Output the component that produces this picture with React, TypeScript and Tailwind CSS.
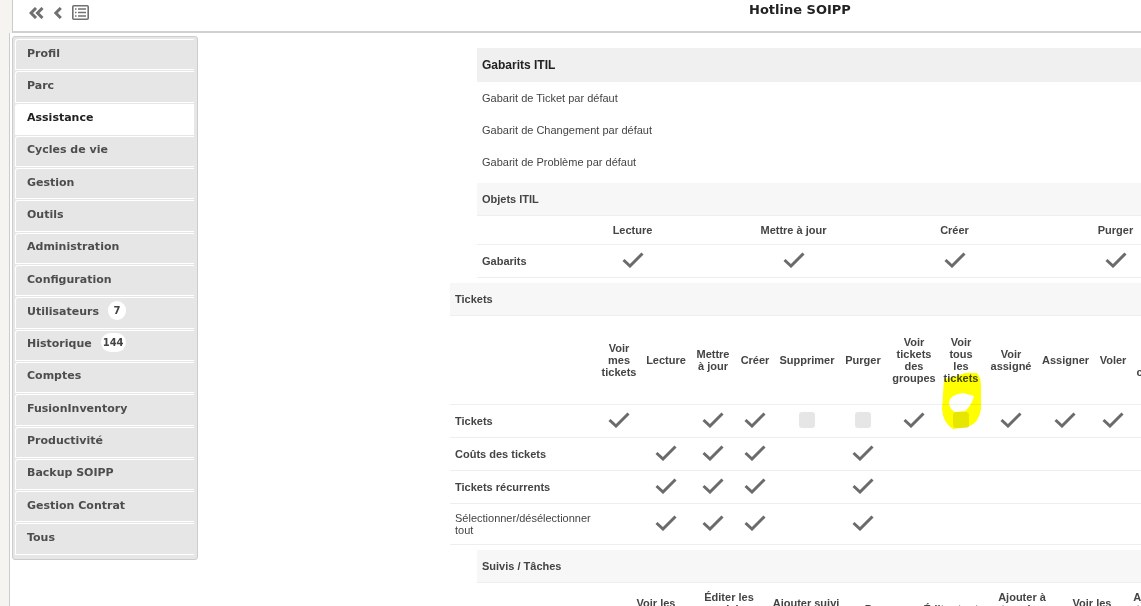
import React from "react";

const menuItems = [
  { label: "Profil" },
  { label: "Parc" },
  { label: "Assistance", active: true },
  { label: "Cycles de vie" },
  { label: "Gestion" },
  { label: "Outils" },
  { label: "Administration" },
  { label: "Configuration" },
  { label: "Utilisateurs", badge: "7" },
  { label: "Historique", badge: "144" },
  { label: "Comptes" },
  { label: "FusionInventory" },
  { label: "Productivité" },
  { label: "Backup SOIPP" },
  { label: "Gestion Contrat" },
  { label: "Tous" },
];

const ticketCols = [
  { w: "w-[46px] px-[4px]", label: "Voir mes tickets" },
  { w: "w-[48px]", label: "Lecture" },
  { w: "w-[46px] px-[4px]", label: "Mettre à jour" },
  { w: "w-[38px]", label: "Créer" },
  { w: "w-[66px]", label: "Supprimer" },
  { w: "w-[46px]", label: "Purger" },
  { w: "w-[56px]", label: "Voir tickets des groupes" },
  { w: "w-[38px]", label: "Voir tous les tickets" },
  { w: "w-[62px]", label: "Voir assigné" },
  { w: "w-[46px]", label: "Assigner" },
  { w: "w-[50px]", label: "Voler" },
  { w: "-ml-[2px] w-[56px]", label: "Voir les tickets concernés" },
];

// y = check, o = greyed box, . = empty
const ticketRows = [
  { label: "Tickets", h: "h-[33px]", cells: "y.yyooyoyyy." },
  { label: "Coûts des tickets", h: "h-[33px]", cells: ".yyy.y......" },
  { label: "Tickets récurrents", h: "h-[33px]", cells: ".yyy.y......" },
  { label: "Sélectionner/désélectionner tout", h: "h-[41px]", cells: ".yyy.y......" },
];

const followCols = [
  { w: "w-[66px]", label: "Voir les suivis" },
  { w: "w-[80px] px-[12px]", label: "Éditer les suivis privés" },
  { w: "w-[74px]", label: "Ajouter suivi privé" },
  { w: "w-[79px]", label: "Purger" },
  { w: "w-[58px]", label: "Éditer tout" },
  { w: "w-[84px] px-[14px]", label: "Ajouter à tous les tickets" },
  { w: "w-[56px]", label: "Voir les tâches" },
  { w: "w-[74px] px-[6px]", label: "Ajouter à tous les suivis" },
];

function Check() {
  return (
    <svg viewBox="0 0 22 16" className="h-4 w-[22px]">
      <path d="M1.5 8 L8 14 L20.5 1.5" fill="none" stroke="#6b6b6b" strokeWidth="3" />
    </svg>
  );
}

function Cell({ kind }: { kind: string }) {
  if (kind === "y") return <Check />;
  if (kind === "o") return <span className="block h-4 w-4 rounded-[3px] bg-[#e6e6e6]" />;
  return null;
}

function HeaderIcons() {
  return (
    <div className="ml-[16px] flex items-center text-[#707070]">
      <svg viewBox="0 0 15 12" className="h-3 w-[15px]">
        <path d="M7 1 L2 6 L7 11 M13.5 1 L8.5 6 L13.5 11" fill="none" stroke="currentColor" strokeWidth="3" />
      </svg>
      <svg viewBox="0 0 8 12" className="ml-[10px] h-3 w-2">
        <path d="M6.8 1 L1.8 6 L6.8 11" fill="none" stroke="currentColor" strokeWidth="3" />
      </svg>
      <svg viewBox="0 0 17 15" className="ml-[10px] h-[15px] w-[17px]">
        <rect x="0.8" y="0.8" width="15.4" height="13.4" rx="1" fill="none" stroke="currentColor" strokeWidth="1.6" />
        <path d="M6 4 H14 M6 7.5 H14 M6 11 H14 M3 4 H4.5 M3 7.5 H4.5 M3 11 H4.5" stroke="currentColor" strokeWidth="1.3" />
      </svg>
    </div>
  );
}

function Sidebar() {
  return (
    <div className="ml-[2px] mt-[3px] h-[524px] w-[186px] shrink-0 rounded-[3px] border border-[#cccccc] bg-[#e6e6e6] py-[2px] pl-[2px] pr-[3px] font-['DejaVu_Sans',sans-serif] text-[11px] font-bold">
      {menuItems.map((item) => (
        <div
          key={item.label}
          className={
            item.active
              ? "mb-[1px] flex h-[31.3px] items-start rounded-tl-[3px] bg-white pl-[12px] pt-[6px] text-[#222222]"
              : "mb-[1px] flex h-[31.3px] items-start rounded-tl-[3px] border-b border-l border-t border-white pl-[11px] pt-[5.5px] text-[#4d4d4d]"
          }
        >
          {item.label}
          {item.badge && (
            <span className="ml-[9px] -mt-[3px] flex h-[19px] min-w-[18px] items-center justify-center rounded-full bg-white px-[2px] text-[10px] text-[#444444]">
              {item.badge}
            </span>
          )}
        </div>
      ))}
    </div>
  );
}

// multiply so the header text and the grey box show through the marker stroke
function HighlightBlob() {
  return (
    <svg viewBox="0 0 42 56" className="absolute left-[491px] top-[340px] h-[56px] w-[42px] mix-blend-multiply">
      <path
        fillRule="evenodd"
        d="M3 6 Q12 5 24 0 L36 0 Q40 4 40 14 L40 36 Q38 50 27 54 L12 56 Q2 50 1 36 Z M8 29 Q9 22 22 20 L33 23 Q31 32 24 38 L14 39 Q8 36 8 29 Z"
        fill="#ffff00"
      />
    </svg>
  );
}

export default function App() {
  return (
    <div className="flex h-[606px] w-[1141px] flex-col overflow-hidden bg-white font-['Liberation_Sans',sans-serif] text-[11px] text-[#444444]">
      <div className="flex h-[33px] shrink-0">
        <div className="w-[13px] shrink-0 border-r border-[#cccccc] bg-[#f5f4f0]" />
        <div className="relative flex flex-1 items-start border-b-2 border-[#d0d0d0] pt-[5px]">
          <HeaderIcons />
          <div className="absolute left-[736px] top-[0px] font-['DejaVu_Sans',sans-serif] text-[13px] font-bold text-[#222222]">
            Hotline SOIPP
          </div>
        </div>
      </div>
      <div className="flex min-h-0 flex-1">
        <div className="w-[10px] shrink-0 border-r border-[#cccccc] bg-[#f5f4f0]" />
        <Sidebar />
        <div className="relative ml-[252px] w-[700px] shrink-0 pt-[15px]">
          <div className="ml-[27px]">
            <div className="flex h-[34px] items-center bg-[#f0f0f0] pl-[5px] text-[12px] font-bold text-[#222222]">
              Gabarits ITIL
            </div>
            {["Gabarit de Ticket par défaut", "Gabarit de Changement par défaut", "Gabarit de Problème par défaut"].map((t) => (
              <div key={t} className="flex h-[32px] items-center pl-[5px]">
                {t}
              </div>
            ))}
            <div className="mt-[5px] flex h-[33px] items-center border-b border-[#eeeeee] bg-[#f7f7f7] pl-[5px] font-bold">
              Objets ITIL
            </div>
            <div className="flex h-[29px] items-center border-b border-[#eeeeee] pl-[75px] font-bold">
              {["Lecture", "Mettre à jour", "Créer", "Purger"].map((c) => (
                <div key={c} className="w-[161px] shrink-0 text-center">
                  {c}
                </div>
              ))}
            </div>
            <div className="flex h-[33px] items-center border-b border-[#eeeeee] pl-[5px] font-bold">
              <div className="w-[70px] shrink-0">Gabarits</div>
              {["a", "b", "c", "d"].map((c) => (
                <div key={c} className="flex w-[161px] shrink-0 justify-center pb-[2px]">
                  <Check />
                </div>
              ))}
            </div>
          </div>

          <div className="mt-[5px] flex h-[33px] items-center border-b border-[#eeeeee] bg-[#f7f7f7] pl-[5px] font-bold">
            Tickets
          </div>
          <div className="flex h-[89px] items-center border-b border-[#eeeeee] pl-[146px] font-bold leading-[12px]">
            {ticketCols.map((c) => (
              <div key={c.label} className={`${c.w} shrink-0 text-center`}>
                {c.label}
              </div>
            ))}
          </div>
          {ticketRows.map((row) => (
            <div key={row.label} className={`${row.h} flex items-center border-b border-[#eeeeee] font-bold`}>
              <div className={row.label.length > 20 ? "w-[146px] shrink-0 pl-[5px] font-normal leading-[12px]" : "w-[146px] shrink-0 pl-[5px]"}>
                {row.label}
              </div>
              {ticketCols.map((c, i) => (
                <div key={c.label} className={`${c.w} flex shrink-0 justify-center pb-[3px]`}>
                  <Cell kind={row.cells[i]} />
                </div>
              ))}
            </div>
          ))}

          <div className="ml-[27px] mt-[5px] flex h-[33px] items-center border-b border-[#eeeeee] bg-[#f7f7f7] pl-[5px] font-bold">
            Suivis / Tâches
          </div>
          <div className="ml-[27px] flex h-[52px] items-center pl-[146px] font-bold leading-[12px]">
            {followCols.map((c) => (
              <div key={c.label} className={`${c.w} shrink-0 text-center`}>
                {c.label}
              </div>
            ))}
          </div>
          <HighlightBlob />
        </div>
      </div>
    </div>
  );
}
